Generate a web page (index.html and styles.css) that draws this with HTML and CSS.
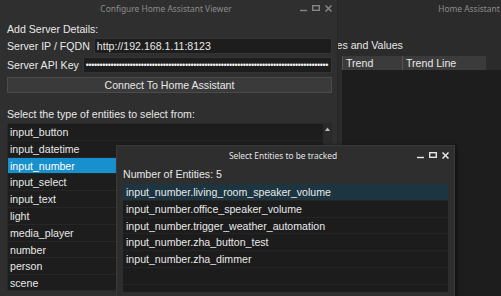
FILE: index.html
```html
<!DOCTYPE html>
<html lang="en">
<head>
    <meta charset="UTF-8">
    <title>Configure Home Assistant Viewer</title>
    <link rel="stylesheet" href="styles.css">
</head>
<body>

<div class="desktop">

    <!-- window behind: the viewer itself -->
    <div class="win back">
        <div class="titlebar">
            <span></span>
            <span class="title">Home Assistant</span>
            <span></span>
        </div>
        <div class="backBody">
            <div class="heading">Entities and Values</div>
            <div class="tableHead">
                <div class="th thTrend">Trend</div>
                <div class="th thLine">Trend Line</div>
            </div>
            <div class="tableBody"></div>
        </div>
    </div>

    <!-- configure window -->
    <div class="win main">
        <div class="titlebar">
            <span></span>
            <span class="title">Configure Home Assistant Viewer</span>
            <span class="controls dim">
                <svg width="7" height="7" viewBox="0 0 7 7"><path d="M0 5.5h7" stroke="currentColor" stroke-width="1.4"/></svg>
                <svg width="8" height="6" viewBox="0 0 8 6"><rect x="0.7" y="0.7" width="6.6" height="4.6" fill="none" stroke="currentColor" stroke-width="1.4"/></svg>
                <svg width="7" height="7" viewBox="0 0 7 7"><path d="M0.5 0.5l6 6M6.5 0.5l-6 6" stroke="currentColor" stroke-width="1.5"/></svg>
            </span>
        </div>
        <div class="content">
            <div class="sectionLabel">Add Server Details:</div>
            <div class="formRow first">
                <label class="lbl">Server IP / FQDN</label>
                <div class="field">http://192.168.1.11:8123</div>
            </div>
            <div class="formRow">
                <label class="lbl">Server API Key</label>
                <div class="field dots">••••••••••••••••••••••••••••••••••••••••••••••••••••••••••••••••••••••••••••••••••••••••</div>
            </div>
            <div class="connectBtn">Connect To Home Assistant</div>

            <div class="sectionLabel select">Select the type of entities to select from:</div>
            <div class="listBox">
                <div class="rows">
                    <div class="row">input_button</div>
                    <div class="row">input_datetime</div>
                    <div class="row sel">input_number</div>
                    <div class="row">input_select</div>
                    <div class="row">input_text</div>
                    <div class="row">light</div>
                    <div class="row">media_player</div>
                    <div class="row">number</div>
                    <div class="row">person</div>
                    <div class="row">scene</div>
                </div>
                <div class="scrollbar">
                    <svg width="5" height="4" viewBox="0 0 5 4"><path d="M0 4L2.5 0.5L5 4Z" fill="#bdbdbd"/></svg>
                </div>
            </div>
        </div>
    </div>

    <!-- popup dialog -->
    <div class="win dialog">
        <div class="titlebar">
            <span></span>
            <span class="title">Select Entities to be tracked</span>
            <span class="controls">
                <svg width="7" height="7" viewBox="0 0 7 7"><path d="M0 5.5h7" stroke="currentColor" stroke-width="1.4"/></svg>
                <svg width="8" height="6" viewBox="0 0 8 6"><rect x="0.7" y="0.7" width="6.6" height="4.6" fill="none" stroke="currentColor" stroke-width="1.4"/></svg>
                <svg width="7" height="7" viewBox="0 0 7 7"><path d="M0.5 0.5l6 6M6.5 0.5l-6 6" stroke="currentColor" stroke-width="1.5"/></svg>
            </span>
        </div>
        <div class="dlgContent">
            <div class="count">Number of Entities: 5</div>
            <div class="entityList">
                <div class="row cur">input_number.living_room_speaker_volume</div>
                <div class="row">input_number.office_speaker_volume</div>
                <div class="row">input_number.trigger_weather_automation</div>
                <div class="row">input_number.zha_button_test</div>
                <div class="row">input_number.zha_dimmer</div>
                <div class="row"></div>
            </div>
        </div>
    </div>

</div>

</body>
</html>
```

FILE: styles.css
```css
html, body {
    margin: 0;
    padding: 0;
    background: #2b2b2b;
}

body {
    font-family: "Liberation Sans", Arial, sans-serif;
    font-size: 10.6px;
    color: #e8e8e8;
}

.desktop {
    position: relative;
    width: 501px;
    height: 296px;
    overflow: hidden;
    background: #2b2b2b;
}

/* windows sit on a free canvas */
.win {
    position: absolute;
    box-sizing: border-box;
}

.titlebar {
    display: grid;
    grid-template-columns: 1fr auto 1fr;
    align-items: center;
    height: 16px;
}

.title {
    font-family: "Noto Sans", sans-serif;
    font-size: 8.4px;
    color: #8c8c8c;
}

.controls {
    justify-self: end;
    display: flex;
    align-items: center;
    gap: 5px;
    color: #e6e6e6;
}

.controls.dim {
    color: #858585;
}

/* ---- back window ---- */
.back {
    left: 250px;
    top: 0;
    width: 438px;
    height: 296px;
    background: #2b2b2b;
}

.backBody {
    padding-top: 21px;
}

.heading {
    padding-left: 63px;
    line-height: 16px;
    height: 18px;
}

.tableHead {
    display: flex;
    height: 14px;
    margin-left: 92px;
    width: 144px;
    background: #3b3b3b;
    margin-top: 1px;
}

.th {
    line-height: 14px;
    padding-left: 3px;
    box-sizing: border-box;
    border-left: 1px solid #555;
}

.thTrend {
    width: 60px;
}

.thLine {
    flex: 1;
}

.tableBody {
    margin-left: 92px;
    height: 240px;
    background: #1d1d1d;
}

/* ---- main window ---- */
.main {
    left: 0;
    top: 0;
    width: 338px;
    height: 296px;
    background: #2f2f2f;
    border-right: 1px solid #262626;
}

.main .titlebar {
    padding-right: 5px;
}

.content {
    padding: 5px 5px 0 7px;
}

.sectionLabel {
    line-height: 16px;
}

.formRow {
    display: flex;
    align-items: center;
    gap: 4px;
    margin-top: 3px;
}

.formRow.first {
    margin-top: 1px;
}

.field {
    flex: 1;
    min-width: 0;
    height: 16px;
    line-height: 14px;
    box-sizing: border-box;
    background: #1d1d1d;
    border: 1px solid #343434;
    padding-left: 2px;
    white-space: nowrap;
    overflow: hidden;
}

.field.dots {
    font-size: 9px;
    letter-spacing: -0.4px;
    color: #f0f0f0;
}

.connectBtn {
    margin-top: 4px;
    height: 16px;
    line-height: 14px;
    box-sizing: border-box;
    background: #3a3a3a;
    border: 1px solid #4b4b4b;
    text-align: center;
}

.sectionLabel.select {
    margin-top: 13px;
    height: 16px;
}

.listBox {
    display: flex;
    margin-top: 1px;
    height: 168px;
    background: #1d1d1d;
    border: 1px solid #282828;
    box-sizing: border-box;
}

.rows {
    flex: 1;
    overflow: hidden;
}

.row {
    height: 16.8px;
    line-height: 16.8px;
    padding-left: 2px;
    box-sizing: border-box;
    border-bottom: 1px solid #262626;
    white-space: nowrap;
}

.row.sel {
    background: #1790cd;
    color: #ffffff;
}

.scrollbar {
    width: 8px;
    background: #2a2a2a;
    display: flex;
    justify-content: center;
    padding-top: 3px;
    box-sizing: border-box;
}

/* ---- dialog ---- */
.dialog {
    left: 116px;
    top: 145px;
    width: 339px;
    height: 160px;
    background: #2e2e2e;
    border: 1px solid #3a3a3a;
    box-shadow: 2px 0 3px rgba(0, 0, 0, 0.4);
}

.dialog .titlebar {
    height: 18px;
    padding-right: 5px;
}

.dialog .title {
    color: #e2e2e2;
}

.dlgContent {
    padding: 2px 6px 0 6px;
}

.count {
    line-height: 16px;
}

.entityList {
    margin-top: 2px;
    height: 108px;
    background: #1c1c1c;
    overflow: hidden;
}

.entityList .row {
    padding-left: 3px;
    border-bottom: 1px solid #242424;
}

.entityList .row.cur {
    background: #1c3541;
}
```
